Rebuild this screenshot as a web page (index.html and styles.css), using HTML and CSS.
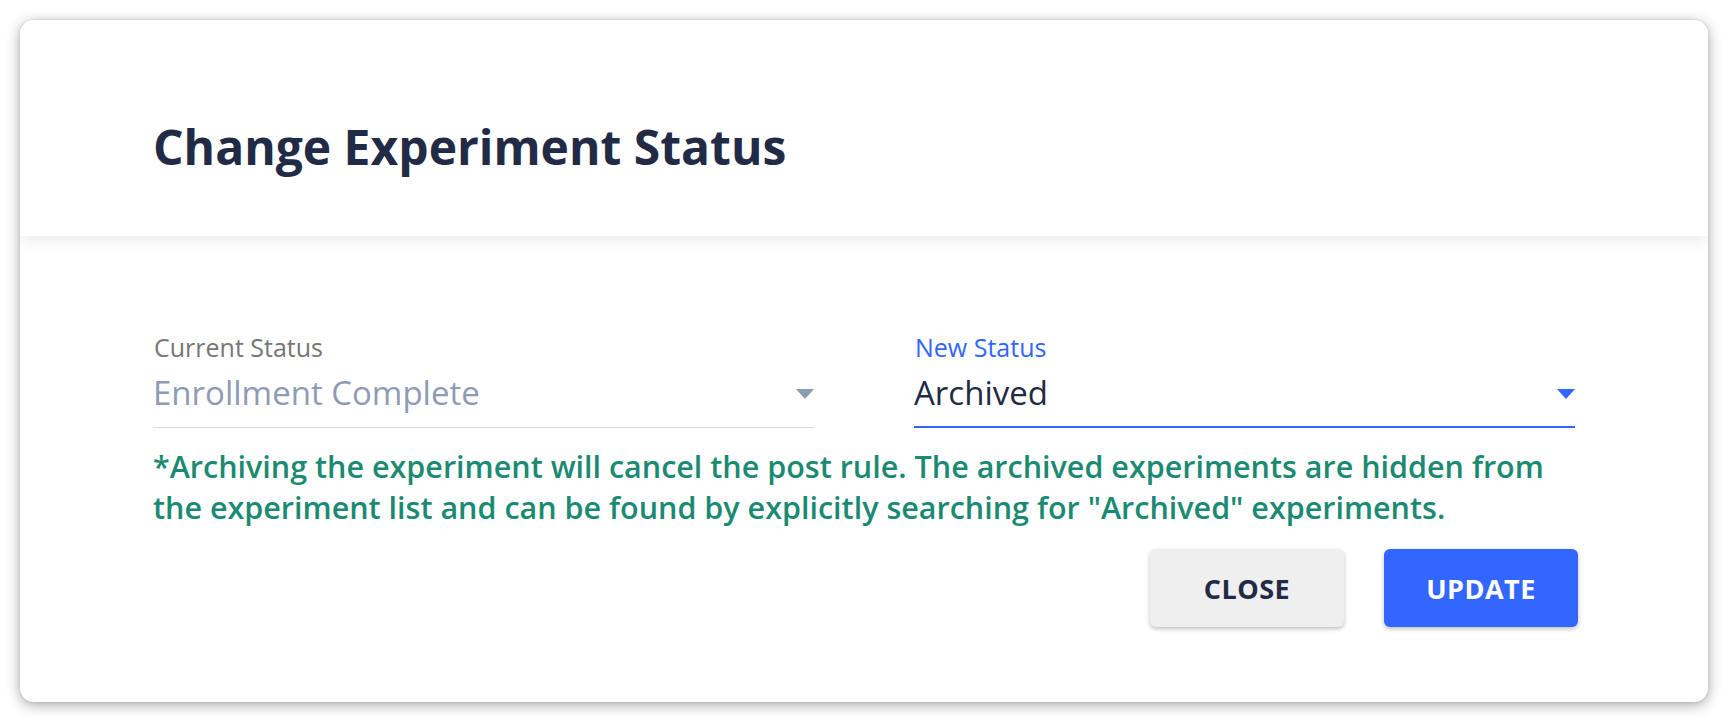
FILE: index.html
```html
<!DOCTYPE html>
<html lang="en">
<head>
<meta charset="utf-8">
<title>Change Experiment Status</title>
<link rel="stylesheet" href="styles.css">
</head>
<body>
<div class="dialog">
  <div class="dialog-header">
    <h1 class="dialog-title">Change Experiment Status</h1>
  </div>
  <div class="dialog-body">
    <div class="fields">
      <div class="field">
        <label class="field-label">Current Status</label>
        <div class="select select-disabled">
          <span class="select-value">Enrollment Complete</span>
          <svg class="select-arrow" viewBox="0 0 18 10" width="18" height="10"><polygon points="0,0 18,0 9,10" fill="#8f9bb3"/></svg>
        </div>
      </div>
      <div class="field">
        <label class="field-label field-label-active">New Status</label>
        <div class="select select-active">
          <span class="select-value">Archived</span>
          <svg class="select-arrow" viewBox="0 0 18 10" width="18" height="10"><polygon points="0,0 18,0 9,10" fill="#3366ff"/></svg>
        </div>
      </div>
    </div>
    <p class="note">*Archiving the experiment will cancel the post rule. The archived experiments are hidden from the experiment list and can be found by explicitly searching for "Archived" experiments.</p>
    <div class="actions">
      <button class="btn btn-close">CLOSE</button>
      <button class="btn btn-update">UPDATE</button>
    </div>
  </div>
</div>
</body>
</html>
```
FILE: styles.css
```css
* { box-sizing: border-box; }
html, body { margin: 0; padding: 0; background: #ffffff; }
body {
  font-family: "Open Sans", "Noto Sans", sans-serif;
  width: 1728px;
  height: 722px;
  padding: 20px;
}
.dialog {
  width: 1688px;
  height: 682px;
  background: #ffffff;
  border-radius: 14px;
  box-shadow: 0 3px 14px rgba(0, 0, 0, 0.34), 0 0 3px rgba(0, 0, 0, 0.12);
  overflow: hidden;
  display: flex;
  flex-direction: column;
}
.dialog-header {
  height: 216px;
  flex: none;
  display: flex;
  align-items: center;
  padding: 38px 133px 0 133px;
  position: relative;
  z-index: 1;
  background: #ffffff;
  box-shadow: 0 6px 14px rgba(0, 0, 0, 0.07);
}
.dialog-title {
  margin: 0;
  font-size: 48px;
  font-weight: 700;
  line-height: 60px;
  color: #222b45;
}
.dialog-body {
  flex: 1;
  padding: 97px 133px 0 133px;
}
.fields {
  display: grid;
  grid-template-columns: 1fr 1fr;
  column-gap: 100px;
}
.field { display: flex; flex-direction: column; }
.field-label {
  font-size: 25px;
  line-height: 28px;
  color: #767676;
  padding-left: 1px;
}
.field-label-active { color: #3366ff; }
.select {
  display: flex;
  align-items: center;
  justify-content: space-between;
  padding: 12px 0 14px 0;
  border-bottom: 1px solid #d9d9d9;
}
.select-active { border-bottom: 2px solid #3366ff; padding-bottom: 13px; }
.select-value {
  font-size: 33px;
  line-height: 40px;
  color: #8f9bb3;
}
.select-active .select-value { color: #222b45; }
.select-arrow { display: block; margin-top: 2px; }
.note {
  margin: 18px 0 0 0;
  max-width: 1410px;
  font-size: 30.5px;
  line-height: 41px;
  font-weight: 600;
  color: #1b8a73;
}
.actions {
  display: flex;
  justify-content: flex-end;
  gap: 40px;
  margin-top: 21px;
  margin-right: -3px;
}
.btn {
  width: 194px;
  height: 78px;
  border: none;
  border-radius: 6px;
  font-family: "Open Sans", "Noto Sans", sans-serif;
  font-size: 27px;
  font-weight: 700;
  letter-spacing: 0.5px;
  box-shadow: 0 2px 4px rgba(0, 0, 0, 0.25);
}
.btn-close { background: #efefef; color: #222b45; }
.btn-update { background: #3366ff; color: #ffffff; }
```
